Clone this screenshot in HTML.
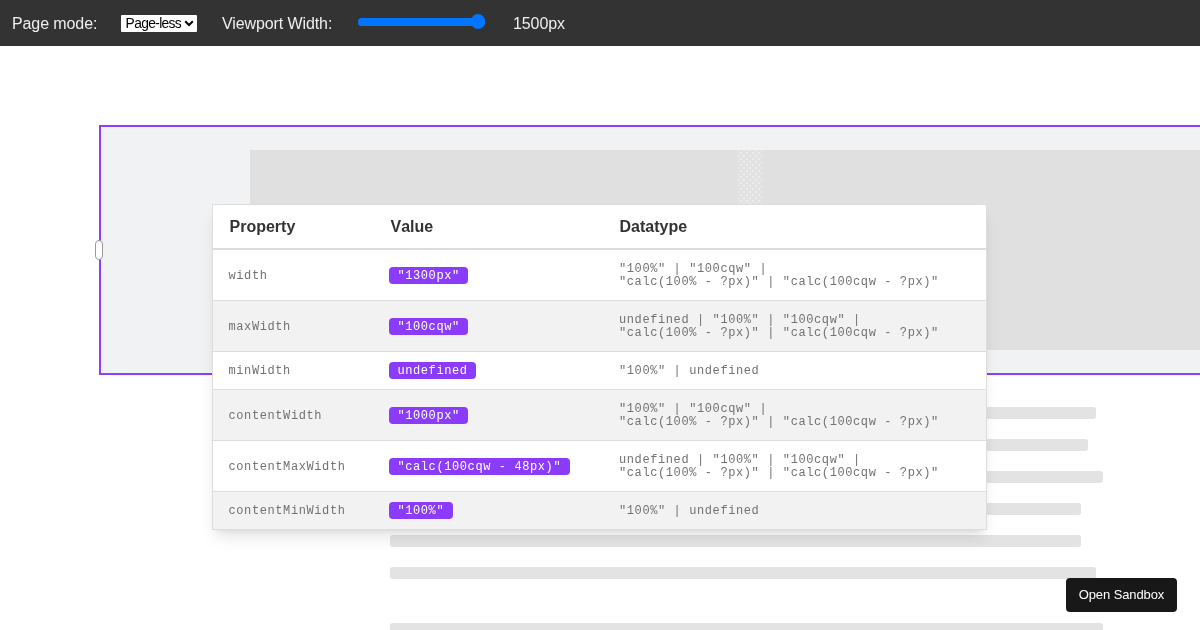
<!DOCTYPE html>
<html>
<head>
<meta charset="utf-8">
<style>
html,body{margin:0;padding:0;}
body{width:1200px;height:630px;overflow:hidden;position:relative;background:#fff;font-family:"Liberation Sans",sans-serif;}
#root{position:absolute;left:0;top:0;width:1200px;height:630px;overflow:hidden;background:#fff;will-change:transform;}
.bar{position:absolute;left:0;top:0;width:1200px;height:46px;background:#333;color:#eee;font-size:16px;}
.bar .t{position:absolute;top:15px;line-height:18px;white-space:nowrap;letter-spacing:-0.1px;}
.sel{position:absolute;left:121px;top:15px;width:76px;height:17px;background:#fff;border-radius:1px;color:#000;font-size:13.8px;}
.sel span{position:absolute;left:4.6px;top:1.4px;line-height:16px;letter-spacing:-0.65px;}
.sel svg{position:absolute;left:63px;top:4.5px;}
.track{position:absolute;left:358px;top:18.45px;width:127px;height:7.1px;border-radius:3.5px;background:#0075ff;}
.thumb{position:absolute;left:470.7px;top:14.2px;width:14.6px;height:14.6px;border-radius:50%;background:#0075ff;}
.frame{position:absolute;left:99px;top:125px;width:1200px;height:250px;box-sizing:border-box;border:2px solid #8a3ffc;border-right:0;background:#f1f2f4;}
.handle{position:absolute;left:95px;top:240px;width:8px;height:20px;box-sizing:border-box;border:1px solid #999;border-radius:4px;background:#fff;}
.gblock{position:absolute;left:250px;top:150px;width:1000px;height:200px;background:#e0e0e0;}
.dots{position:absolute;left:738px;top:150px;width:24px;height:200px;background-color:#e2e2e2;background-image:radial-gradient(circle at 50% 50%,#ececec 0.8px,transparent 1.2px),radial-gradient(circle at 50% 50%,#ececec 0.8px,transparent 1.2px);background-size:6px 6px,6px 6px;background-position:0 0,3px 3px;}
.sk{position:absolute;left:390px;height:12px;border-radius:3px;background:#e3e3e3;}
.tbl{position:absolute;left:212px;top:204px;width:775px;box-sizing:border-box;border:1px solid #ddd;background:#fff;box-shadow:0 10px 15px -3px rgba(0,0,0,.1),0 4px 6px -4px rgba(0,0,0,.1);}
.row{position:relative;border-top:1px solid #ddd;}
.row.g{background:#f2f2f2;}
.hdr{height:43px;border-bottom:2px solid #ddd;font-weight:bold;font-size:16px;color:#333;font-kerning:none;}
.hdr span{position:absolute;top:13px;line-height:18px;}
.c1{position:absolute;left:15.5px;}
.c2{position:absolute;left:176px;}
.c3{position:absolute;left:406px;}
.hdr .c1{left:16.5px}.hdr .c2{left:177.5px}.hdr .c3{left:406.5px}
.m{font-family:"Liberation Mono",monospace;font-size:12px;letter-spacing:0.6px;color:#727272;white-space:pre;line-height:13px;}
.pill{position:absolute;left:176.1px;height:17px;border-radius:4px;background:#8b3cfb;color:#fff;padding:1px 8.3px 0;box-sizing:border-box;line-height:17px;font-family:"Liberation Mono",monospace;font-size:12px;letter-spacing:0.6px;white-space:pre;}
.btn{position:absolute;left:1066px;top:578px;width:111px;height:34px;border-radius:4px;background:#181818;color:#fff;font-size:13px;line-height:34px;text-align:center;letter-spacing:-0.1px;}
</style>
</head>
<body>
<div id="root">
<div class="bar">
  <span class="t" style="left:12px">Page mode:</span>
  <div class="sel"><span>Page-less</span><svg width="10" height="7" viewBox="0 0 10 7"><path d="M1.2 1.2 L5 5 L8.8 1.2" fill="none" stroke="#000" stroke-width="2"/></svg></div>
  <span class="t" style="left:222px">Viewport Width:</span>
  <div class="track"></div><div class="thumb"></div>
  <span class="t" style="left:513px">1500px</span>
</div>

<div class="frame"></div>
<div class="gblock"></div>
<div class="dots"></div>
<div class="handle"></div>

<div class="sk" style="top:407px;width:706px"></div>
<div class="sk" style="top:439px;width:698px"></div>
<div class="sk" style="top:471px;width:713px"></div>
<div class="sk" style="top:503px;width:691px"></div>
<div class="sk" style="top:535px;width:691px"></div>
<div class="sk" style="top:567px;width:706px"></div>
<div class="sk" style="top:623px;width:713px"></div>

<div class="tbl">
  <div class="row hdr" style="border-top:0">
    <span class="c1">Property</span><span class="c2">Value</span><span class="c3">Datatype</span>
  </div>
  <div class="row" style="height:50px;border-top:0">
    <span class="c1 m" style="top:20px">width</span>
    <span class="pill" style="top:17px">"1300px"</span>
    <span class="c3 m" style="top:13px">"100%" | "100cqw" |
"calc(100% - ?px)" | "calc(100cqw - ?px)"</span>
  </div>
  <div class="row g" style="height:50px">
    <span class="c1 m" style="top:20px">maxWidth</span>
    <span class="pill" style="top:17px">"100cqw"</span>
    <span class="c3 m" style="top:13px">undefined | "100%" | "100cqw" |
"calc(100% - ?px)" | "calc(100cqw - ?px)"</span>
  </div>
  <div class="row" style="height:37px">
    <span class="c1 m" style="top:13px">minWidth</span>
    <span class="pill" style="top:10px">undefined</span>
    <span class="c3 m" style="top:13px">"100%" | undefined</span>
  </div>
  <div class="row g" style="height:50px">
    <span class="c1 m" style="top:20px">contentWidth</span>
    <span class="pill" style="top:17px">"1000px"</span>
    <span class="c3 m" style="top:13px">"100%" | "100cqw" |
"calc(100% - ?px)" | "calc(100cqw - ?px)"</span>
  </div>
  <div class="row" style="height:50px">
    <span class="c1 m" style="top:20px">contentMaxWidth</span>
    <span class="pill" style="top:17px">"calc(100cqw - 48px)"</span>
    <span class="c3 m" style="top:13px">undefined | "100%" | "100cqw" |
"calc(100% - ?px)" | "calc(100cqw - ?px)"</span>
  </div>
  <div class="row g" style="height:37px">
    <span class="c1 m" style="top:13px">contentMinWidth</span>
    <span class="pill" style="top:10px">"100%"</span>
    <span class="c3 m" style="top:13px">"100%" | undefined</span>
  </div>
</div>

<div class="btn">Open Sandbox</div>
</div>
</body>
</html>
